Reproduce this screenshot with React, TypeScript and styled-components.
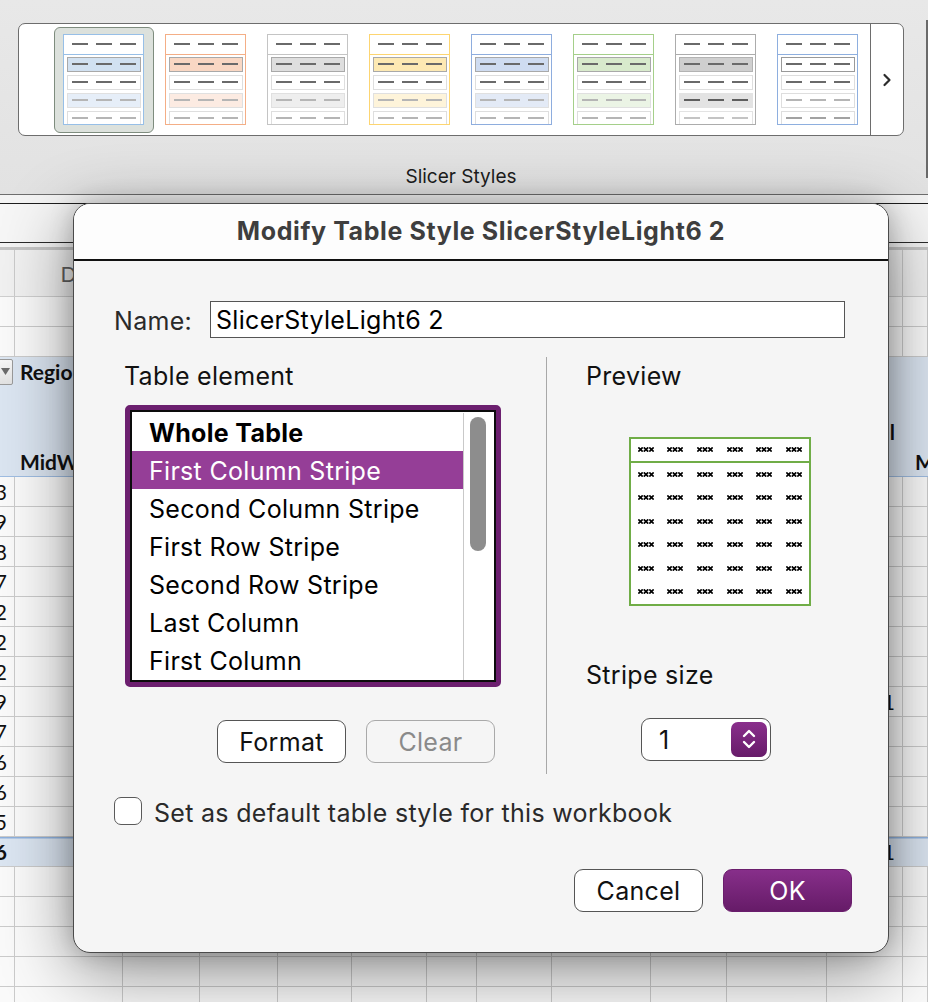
import React from 'react';
import styled, { createGlobalStyle } from 'styled-components';

const Global = createGlobalStyle`
  html, body { margin: 0; padding: 0; }
  body {
    width: 928px; height: 1002px; overflow: hidden;
    font-family: Inter, "Noto Sans", sans-serif;
    -webkit-font-smoothing: antialiased;
  }
  * { box-sizing: border-box; }
`;

const UI_FONT = `Inter, "Noto Sans", sans-serif`;
const SHEET_FONT = `Lato, "Liberation Sans", sans-serif`;

const Page = styled.div`
  position: relative;
  width: 928px;
  height: 1002px;
  overflow: hidden;
  background: #f2f2f2;
  display: flex;
  flex-direction: column;
`;

/* ---------------- Ribbon ---------------- */
const Ribbon = styled.div`
  flex-shrink: 0;
  height: 195px;
  background: linear-gradient(#e8e8e8, #e2e2e2);
  border-bottom: 1px solid #6e6e6e;
  display: flex;
`;

const RibbonGroup = styled.div`
  width: 926px;
  padding: 23px 0 0 18px;
  display: flex;
  flex-direction: column;
`;

const RibbonSep = styled.div`
  width: 1.5px;
  margin-top: 20px;
  height: 158px;
  background: #6a6a6a;
`;

const Gallery = styled.div`
  width: 886px;
  height: 113px;
  border: 1.5px solid #6d6d6d;
  border-radius: 7px;
  background: #fff;
  display: flex;
  align-items: center;
  padding-left: 34.5px;
`;

const Slots = styled.div`
  display: flex;
  gap: 2px;
`;

const Slot = styled.div<{ $selected?: boolean }>`
  width: 100px;
  height: 106px;
  border-radius: 6px;
  border: 1.5px solid ${p => (p.$selected ? '#7e8c7e' : 'transparent')};
  background: ${p => (p.$selected ? '#dce1dc' : 'transparent')};
  display: flex;
  align-items: center;
  justify-content: center;
`;

const Thumb = styled.div<{ $border: string }>`
  width: 81px;
  height: 91px;
  border: 1.5px solid ${p => p.$border};
  background: #fff;
  display: flex;
  flex-direction: column;
  overflow: hidden;
`;

const ThumbHead = styled.div<{ $border: string }>`
  flex-shrink: 0;
  height: 19.5px;
  border-bottom: 1.5px solid ${p => p.$border};
  display: flex;
  align-items: center;
  justify-content: center;
  gap: 8px;
`;

const ThumbRows = styled.div`
  display: flex;
  flex-direction: column;
  gap: 3px;
  padding: 2px 2.5px 0;
`;

const ThumbRow = styled.div<{ $bg: string; $bd: string }>`
  flex-shrink: 0;
  height: 15px;
  border: 1.7px solid ${p => p.$bd};
  background: ${p => p.$bg};
  display: flex;
  align-items: center;
  justify-content: center;
  gap: 8px;
`;

const Dash = styled.span<{ $c: string }>`
  width: 16px;
  height: 2px;
  background: ${p => p.$c};
`;

const GalleryArrow = styled.div`
  margin-left: auto;
  width: 33px;
  align-self: stretch;
  border-left: 1.2px solid #6d6d6d;
  display: flex;
  align-items: center;
  justify-content: center;
`;

const GroupLabel = styled.div`
  width: 886px;
  margin-top: 30px;
  text-align: center;
  font-family: ${UI_FONT};
  font-size: 19px;
  line-height: 22px;
  color: #1c1c1c;
`;

/* ---------------- Sheet ---------------- */
const SheetTopGap = styled.div`
  flex-shrink: 0;
  height: 9px;
  background: #f4f4f4;
  border-bottom: 1px solid #1e1e1e;
`;

const FormulaBar = styled.div`
  flex-shrink: 0;
  height: 39px;
  background: #f6f6f6;
  border-bottom: 1px solid #2a2a2a;
`;

const HeaderGap = styled.div`
  flex-shrink: 0;
  height: 4px;
  background: #f3f3f3;
`;

const ColHeaderRow = styled.div`
  flex-shrink: 0;
  height: 50px;
  display: flex;
  border-top: 3px solid #c4c4c4;
  border-bottom: 1px solid #cfcfcf;
  background: #f1f1f1;
`;

type RowVariant = 'plain' | 'band' | 'bandEnd' | 'total';

const SheetRow = styled.div<{ $variant: RowVariant }>`
  flex-shrink: 0;
  height: 30px;
  display: flex;
  background: ${p => (p.$variant === 'plain' ? '#fafafa' : '#dbe5f1')};
  border-bottom: 1px solid
    ${p =>
      p.$variant === 'band' ? '#dbe5f1' : p.$variant === 'bandEnd' ? '#9fbde2' : '#cbcbcb'};
  box-shadow: ${p => (p.$variant === 'total' ? 'inset 0 1.5px 0 #8fb1dd' : 'none')};
`;

const Cell = styled.div<{
  $w: number;
  $align?: 'left' | 'right' | 'center';
  $bold?: boolean;
  $grid?: boolean;
  $muted?: boolean;
  $padLeft?: number;
}>`
  width: ${p => p.$w}px;
  flex-shrink: 0;
  border-right: 1px solid ${p => (p.$grid ? '#cbcbcb' : 'transparent')};
  display: flex;
  align-items: center;
  justify-content: ${p => (p.$align === 'right' ? 'flex-end' : p.$align === 'center' ? 'center' : 'flex-start')};
  padding: 0 ${p => (p.$align === 'right' ? 7 : 5)}px 0 ${p => p.$padLeft ?? 5}px;
  font-family: ${SHEET_FONT};
  font-size: 21px;
  font-weight: ${p => (p.$bold ? 700 : 400)};
  color: ${p => (p.$muted ? '#606060' : '#111')};
  white-space: nowrap;
`;

const FilterCell = styled.div<{ $w: number }>`
  width: ${p => p.$w}px;
  flex-shrink: 0;
  display: flex;
  align-items: center;
  justify-content: flex-end;
  padding-right: 2px;
`;

const FilterButton = styled.div`
  flex-shrink: 0;
  width: 24px;
  height: 26px;
  border: 1.5px solid #9a9a9a;
  border-radius: 2px;
  background: linear-gradient(#f7f7f7, #e2e2e2);
  display: flex;
  align-items: center;
  justify-content: flex-end;
  padding-right: 2px;
`;

/* ---------------- Dialog ---------------- */
const Dialog = styled.div`
  position: absolute;
  left: 73px;
  top: 202.5px;
  width: 816px;
  height: 750px;
  border: 1.5px solid #4a4a4a;
  border-radius: 17px;
  background: #f5f5f5;
  overflow: hidden;
  display: flex;
  flex-direction: column;
  box-shadow: 0 18px 70px rgba(0, 0, 0, 0.45), 0 0 24px rgba(0, 0, 0, 0.2);
  font-family: ${UI_FONT};
  color: #111;
`;

const TitleBar = styled.div`
  flex-shrink: 0;
  height: 57px;
  background: #fdfdfd;
  border-bottom: 2px solid #111;
  display: flex;
  align-items: center;
  justify-content: center;
  font-size: 25px;
  font-weight: 700;
  color: #3e3e3e;
  letter-spacing: 0.6px;
`;

const DialogBody = styled.div`
  flex: 1;
  display: flex;
  flex-direction: column;
  padding: 40px 36px 0 40px;
`;

const NameRow = styled.div`
  display: flex;
  align-items: center;
  height: 37px;
`;

const FieldLabel = styled.div<{ $w?: number }>`
  width: ${p => (p.$w ? `${p.$w}px` : 'auto')};
  height: 34px;
  font-size: 25px;
  line-height: 30px;
  padding-top: 4px;
  color: #2a2a2a;
  white-space: nowrap;
  letter-spacing: 0.3px;
`;

const TextInput = styled.div`
  width: 635px;
  height: 37px;
  border: 1.7px solid #555;
  background: #fff;
  display: flex;
  align-items: center;
  padding: 2px 0 0 5px;
  font-size: 25px;
  color: #000;
  letter-spacing: 0.3px;
`;

const Columns = styled.div`
  display: flex;
  margin-top: 19px;
  height: 417px;
`;

const LeftCol = styled.div`
  width: 433px;
  border-right: 1.5px solid #a8a8a8;
  display: flex;
  flex-direction: column;
`;

const RightCol = styled.div`
  flex: 1;
  display: flex;
  flex-direction: column;
  padding-left: 39px;
`;

const SectionLabel = styled(FieldLabel)<{ $indent?: number; $top?: number }>`
  padding-left: ${p => p.$indent ?? 0}px;
  margin-top: ${p => p.$top ?? 0}px;
  color: #111;
`;

const ListBox = styled.div`
  margin: 14px 0 0 11px;
  width: 376px;
  height: 282px;
  border: 5px solid #6c1f6f;
  border-radius: 5px;
  background: #fff;
  box-shadow: inset 0 0 0 2px #0c0c0c;
  padding: 3px 2px 2px 2px;
  display: flex;
`;

const ListItems = styled.div`
  flex: 1;
  display: flex;
  flex-direction: column;
  overflow: hidden;
`;

const ListItem = styled.div<{ $selected?: boolean; $bold?: boolean }>`
  flex-shrink: 0;
  height: 38px;
  display: flex;
  align-items: center;
  padding: 2px 0 0 17px;
  font-size: 25px;
  letter-spacing: 0.3px;
  font-weight: ${p => (p.$bold ? 700 : 400)};
  color: ${p => (p.$selected ? '#fff' : '#000')};
  background: ${p => (p.$selected ? '#953e97' : 'transparent')};
  white-space: nowrap;
`;

const ScrollTrack = styled.div`
  width: 31px;
  flex-shrink: 0;
  border-left: 1.5px solid #c9c9c9;
  padding: 4px 0 0 6px;
`;

const ScrollThumb = styled.div`
  width: 16px;
  height: 134px;
  border-radius: 8px;
  background: #8d8d8d;
`;

const ButtonRow = styled.div<{ $justify?: string; $top?: number; $indent?: number }>`
  display: flex;
  gap: 20px;
  justify-content: ${p => p.$justify ?? 'flex-start'};
  margin-top: ${p => p.$top ?? 0}px;
  padding-left: ${p => p.$indent ?? 0}px;
`;

const PushButton = styled.div<{ $variant?: 'default' | 'disabled' | 'primary' }>`
  width: 129px;
  height: 43px;
  border-radius: 9px;
  display: flex;
  align-items: center;
  justify-content: center;
  padding-top: 2px;
  font-size: 25px;
  letter-spacing: 0.3px;
  border: 1.5px solid
    ${p => (p.$variant === 'disabled' ? '#a9a9a9' : p.$variant === 'primary' ? '#6a1d6c' : '#555')};
  background: ${p =>
    p.$variant === 'primary'
      ? 'linear-gradient(#872f8a, #661b68)'
      : p.$variant === 'disabled'
      ? 'transparent'
      : '#fff'};
  color: ${p => (p.$variant === 'disabled' ? '#8a8a8a' : p.$variant === 'primary' ? '#fff' : '#111')};
`;

const PreviewTable = styled.div`
  margin: 46px 0 0 43px;
  width: 182px;
  height: 169px;
  border: 2px solid #70ad47;
  background: #fff;
  display: flex;
  flex-direction: column;
`;

const PreviewRow = styled.div<{ $head?: boolean }>`
  flex: ${p => (p.$head ? '0 0 24px' : '1')};
  border-bottom: ${p => (p.$head ? '2px solid #70ad47' : 'none')};
  display: grid;
  grid-template-columns: repeat(6, 1fr);
  align-items: center;
  justify-items: center;
`;

const Spinner = styled.div`
  margin: 28px 0 0 55px;
  width: 130px;
  height: 43px;
  border: 1.7px solid #555;
  border-radius: 9px;
  background: #fff;
  display: flex;
  align-items: center;
  padding: 0 3px 0 17px;
  font-size: 25px;
`;

const SpinValue = styled.span`
  padding-top: 2px;
`;

const StepButton = styled.div`
  margin-left: auto;
  width: 36px;
  height: 35px;
  border-radius: 7px;
  background: linear-gradient(#8a2f8c, #671c69);
  display: flex;
  align-items: center;
  justify-content: center;
`;

const CheckRow = styled.div`
  margin-top: 23px;
  display: flex;
  align-items: center;
  gap: 12px;
  height: 28px;
`;

const CheckBox = styled.div`
  width: 28px;
  height: 28px;
  border: 1.7px solid #5a5a5a;
  border-radius: 7px;
  background: #fff;
`;

/* ---------------- Data ---------------- */
type TRow = { bg: string; bd: string; dash: string };
type ThumbDef = { border: string; rows: TRow[] };

const DK = '#6a6a6a';
const LT = '#b5b5b5';
const std = (border: string, f1: string, f3: string): ThumbDef => ({
  border,
  rows: [
    { bg: f1, bd: '#a9a9a9', dash: DK },
    { bg: '#fff', bd: '#dedede', dash: DK },
    { bg: f3, bd: '#e0e0e0', dash: LT },
    { bg: '#fff', bd: '#dedede', dash: LT },
  ],
});

const THUMBS: ThumbDef[] = [
  std('#97bfe7', '#d1e1f1', '#e6eef8'),
  std('#f4ae86', '#f9d7c3', '#fcebe2'),
  std('#c4c4c4', '#dedede', '#eeeeee'),
  std('#fdd571', '#fde9b3', '#fef4da'),
  std('#8eadde', '#cfdcf1', '#e3eaf6'),
  std('#a5cf8a', '#d8eacc', '#ebf4e5'),
  {
    border: '#acacac',
    rows: [
      { bg: '#cfcfcf', bd: '#b3b3b3', dash: DK },
      { bg: '#fff', bd: '#dedede', dash: DK },
      { bg: '#e3e3e3', bd: '#e3e3e3', dash: '#5e5e5e' },
      { bg: '#fff', bd: '#e3e3e3', dash: '#c4c4c4' },
    ],
  },
  {
    border: '#8eafdf',
    rows: [
      { bg: '#fff', bd: '#9a9a9a', dash: DK },
      { bg: '#fff', bd: '#dedede', dash: DK },
      { bg: '#fff', bd: '#dedede', dash: LT },
      { bg: '#fff', bd: '#dedede', dash: '#a2a2a2' },
    ],
  },
];

const COLS = [15, 108, 77, 78, 74, 75, 50, 75, 99, 76, 100, 76, 25];
const LEFT_VALUES = ['3', '9', '8', '7', '2', '2', '2', '9', '7', '6', '6', '5'];

const LIST = [
  'Whole Table',
  'First Column Stripe',
  'Second Column Stripe',
  'First Row Stripe',
  'Second Row Stripe',
  'Last Column',
  'First Column',
];

const Dashes = ({ c }: { c: string }) => (
  <>
    <Dash $c={c} />
    <Dash $c={c} />
    <Dash $c={c} />
  </>
);

const StyleThumb = ({ def }: { def: ThumbDef }) => (
  <Thumb $border={def.border}>
    <ThumbHead $border={def.border}>
      <Dashes c={DK} />
    </ThumbHead>
    <ThumbRows>
      {def.rows.map((r, i) => (
        <ThumbRow key={i} $bg={r.bg} $bd={r.bd}>
          <Dashes c={r.dash} />
        </ThumbRow>
      ))}
    </ThumbRows>
  </Thumb>
);

/* tiny checkered "xxx" placeholder used in the preview grid */
const Mark = () => (
  <svg width="16" height="5" viewBox="0 0 16 5">
    {[0, 5.5, 11].map(x => (
      <path
        key={x}
        d={`M${x + 0.3} 0.4 L${x + 4.7} 4.6 M${x + 4.7} 0.4 L${x + 0.3} 4.6`}
        stroke="#000"
        strokeWidth="1.7"
        fill="none"
      />
    ))}
  </svg>
);

const GridRow = ({ left, right, boldLeft }: { left?: string; right?: string; boldLeft?: boolean }) => (
  <SheetRow $variant="plain">
    {COLS.map((w, i) => (
      <Cell key={i} $w={w} $grid $align={i === 0 || i === 11 ? 'right' : 'left'} $bold={i === 0 && boldLeft}>
        {i === 0 ? left : i === 11 ? right : null}
      </Cell>
    ))}
  </SheetRow>
);

const BandRow = ({
  variant,
  children,
}: {
  variant: RowVariant;
  children: (i: number) => React.ReactNode;
}) => (
  <SheetRow $variant={variant}>
    {COLS.map((w, i) => (
      <React.Fragment key={i}>{children(i)}</React.Fragment>
    ))}
  </SheetRow>
);

export default function App() {
  return (
    <>
      <Global />
      <Page>
        <Ribbon>
          <RibbonGroup>
            <Gallery>
              <Slots>
                {THUMBS.map((t, i) => (
                  <Slot key={i} $selected={i === 0}>
                    <StyleThumb def={t} />
                  </Slot>
                ))}
              </Slots>
              <GalleryArrow>
                <svg width="10" height="14" viewBox="0 0 10 14">
                  <path d="M2.5 2 L7.5 7 L2.5 12" fill="none" stroke="#2c2c2c" strokeWidth="2.2" strokeLinecap="round" strokeLinejoin="round" />
                </svg>
              </GalleryArrow>
            </Gallery>
            <GroupLabel>Slicer Styles</GroupLabel>
          </RibbonGroup>
          <RibbonSep />
        </Ribbon>

        <SheetTopGap />
        <FormulaBar />
        <HeaderGap />
        <ColHeaderRow>
          {COLS.map((w, i) => (
            <Cell key={i} $w={w} $grid $align="center" $muted>
              {i === 1 ? 'D' : null}
            </Cell>
          ))}
        </ColHeaderRow>

        <GridRow />
        <GridRow />

        <BandRow variant="band">
          {i =>
            i === 0 ? (
              <FilterCell $w={COLS[i]}>
                <FilterButton>
                  <svg width="9" height="7" viewBox="0 0 9 7">
                    <path d="M0 0 H9 L4.5 7 Z" fill="#6b6b6b" />
                  </svg>
                </FilterButton>
              </FilterCell>
            ) : (
              <Cell $w={COLS[i]} $bold>
                {i === 1 ? 'Region' : null}
              </Cell>
            )
          }
        </BandRow>
        <BandRow variant="band">{i => <Cell $w={COLS[i]} />}</BandRow>
        <BandRow variant="band">
          {i => (
            <Cell $w={COLS[i]} $bold $align={i === 11 ? 'right' : 'left'}>
              {i === 11 ? 'Total' : null}
            </Cell>
          )}
        </BandRow>
        <BandRow variant="bandEnd">
          {i => (
            <Cell $w={COLS[i]} $bold $padLeft={i === 12 ? 12 : 5}>
              {i === 1 || i === 12 ? 'MidWest' : null}
            </Cell>
          )}
        </BandRow>

        {LEFT_VALUES.map((v, i) => (
          <GridRow key={i} left={v} right={i === 7 ? '1' : undefined} />
        ))}

        <BandRow variant="total">
          {i => (
            <Cell $w={COLS[i]} $align={i === 0 || i === 11 ? 'right' : 'left'} $bold={i === 0}>
              {i === 0 ? '6' : i === 11 ? '1' : null}
            </Cell>
          )}
        </BandRow>

        <GridRow />
        <GridRow />
        <GridRow />
        <GridRow />
        <GridRow />

        <Dialog>
          <TitleBar>Modify Table Style SlicerStyleLight6 2</TitleBar>
          <DialogBody>
            <NameRow>
              <FieldLabel $w={96}>Name:</FieldLabel>
              <TextInput>SlicerStyleLight6 2</TextInput>
            </NameRow>

            <Columns>
              <LeftCol>
                <SectionLabel $indent={10}>Table element</SectionLabel>
                <ListBox>
                  <ListItems>
                    {LIST.map((t, i) => (
                      <ListItem key={t} $bold={i === 0} $selected={i === 1}>
                        {t}
                      </ListItem>
                    ))}
                  </ListItems>
                  <ScrollTrack>
                    <ScrollThumb />
                  </ScrollTrack>
                </ListBox>
                <ButtonRow $top={33} $indent={103}>
                  <PushButton>Format</PushButton>
                  <PushButton $variant="disabled">Clear</PushButton>
                </ButtonRow>
              </LeftCol>

              <RightCol>
                <SectionLabel>Preview</SectionLabel>
                <PreviewTable>
                  {Array.from({ length: 7 }).map((_, r) => (
                    <PreviewRow key={r} $head={r === 0}>
                      {Array.from({ length: 6 }).map((__, c) => (
                        <Mark key={c} />
                      ))}
                    </PreviewRow>
                  ))}
                </PreviewTable>
                <SectionLabel $top={50}>Stripe size</SectionLabel>
                <Spinner>
                  <SpinValue>1</SpinValue>
                  <StepButton>
                    <svg width="20" height="26" viewBox="0 0 20 26">
                      <path d="M5 10 L10 5 L15 10" fill="none" stroke="#fff" strokeWidth="2.4" strokeLinecap="round" strokeLinejoin="round" />
                      <path d="M5 16 L10 21 L15 16" fill="none" stroke="#fff" strokeWidth="2.4" strokeLinecap="round" strokeLinejoin="round" />
                    </svg>
                  </StepButton>
                </Spinner>
              </RightCol>
            </Columns>

            <CheckRow>
              <CheckBox />
              <FieldLabel>Set as default table style for this workbook</FieldLabel>
            </CheckRow>

            <ButtonRow $justify="flex-end" $top={44}>
              <PushButton>Cancel</PushButton>
              <PushButton $variant="primary">OK</PushButton>
            </ButtonRow>
          </DialogBody>
        </Dialog>
      </Page>
    </>
  );
}
